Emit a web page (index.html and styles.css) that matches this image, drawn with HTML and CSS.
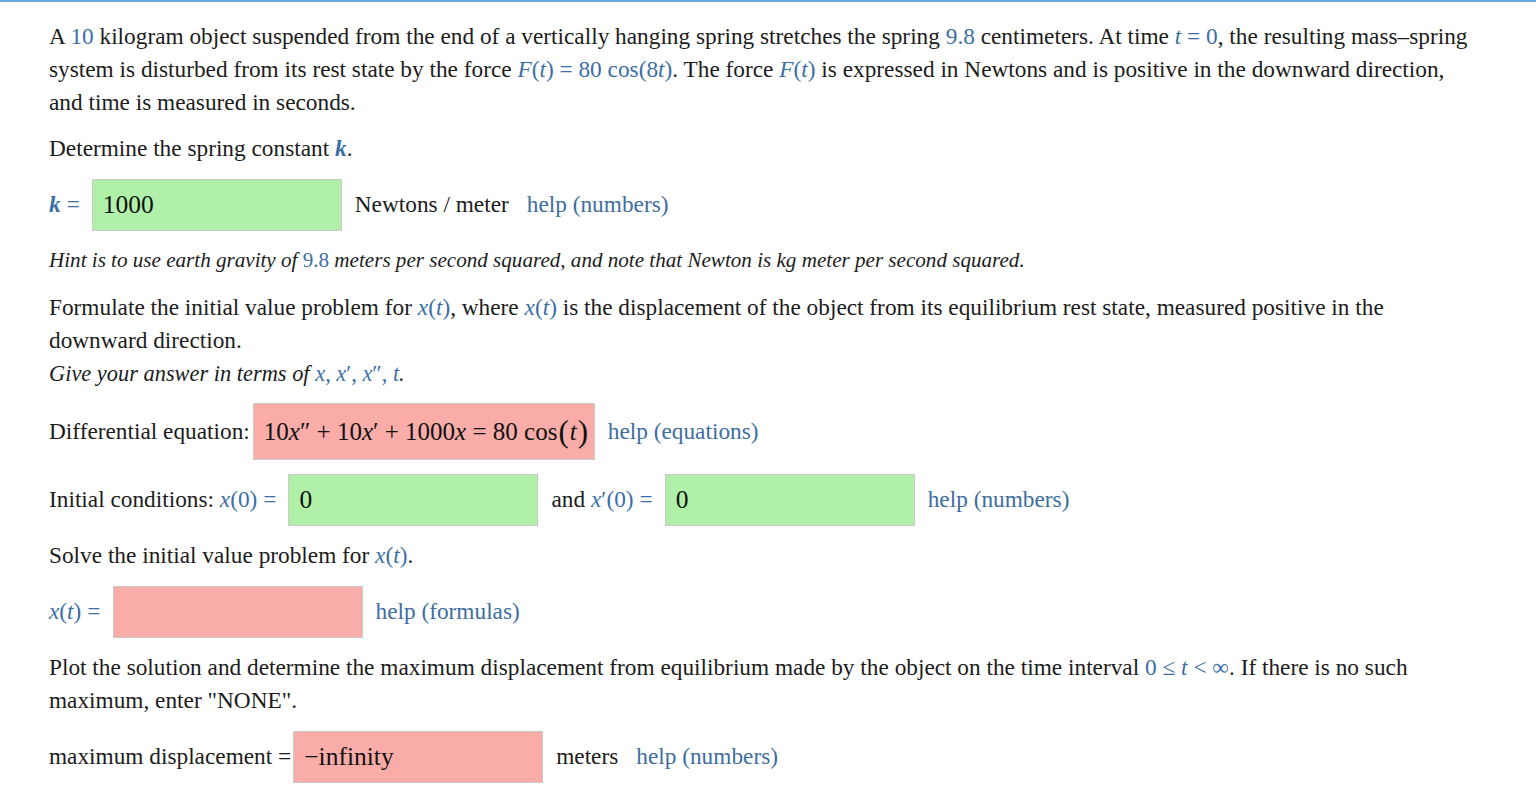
FILE: index.html
```html
<!DOCTYPE html>
<html lang="en">
<head>
<meta charset="utf-8">
<title>Mass-spring problem</title>
<link rel="stylesheet" href="styles.css">
</head>
<body>
<div class="topbar"></div>
<main class="problem">
  <p class="para">A <span class="m">10</span> kilogram object suspended from the end of a vertically hanging spring stretches the spring <span class="m">9.8</span> centimeters. At time <span class="m"><i>t</i> = 0</span>, the resulting mass–spring<br>system is disturbed from its rest state by the force <span class="m"><i>F</i>(<i>t</i>) = 80 cos(8<i>t</i>)</span>. The force <span class="m"><i>F</i>(<i>t</i>)</span> is expressed in Newtons and is positive in the downward direction,<br>and time is measured in seconds.</p>

  <p class="para">Determine the spring constant <span class="m"><i><b>k</b></i></span>.</p>

  <div class="row">
    <span class="m label"><i><b>k</b></i><span class="rel">=</span></span>
    <span class="ans ok">1000</span>
    <span class="unit">Newtons / meter</span>
    <a class="help" href="#">help (numbers)</a>
  </div>

  <p class="para hint">Hint is to use earth gravity of <span class="m up">9.8</span> meters per second squared, and note that Newton is kg meter per second squared.</p>

  <p class="para">Formulate the initial value problem for <span class="m"><i>x</i>(<i>t</i>)</span>, where <span class="m"><i>x</i>(<i>t</i>)</span> is the displacement of the object from its equilibrium rest state, measured positive in the<br>downward direction.<br><em class="give">Give your answer in terms of <span class="m"><i>x</i>, <i>x</i>′, <i>x</i>″, <i>t</i></span>.</em></p>

  <div class="row">
    <span class="label tight">Differential equation:</span>
    <span class="ans bad eq">10<i>x</i>″ + 10<i>x</i>′ + 1000<i>x</i> = 80 cos<span class="bigp">(</span><i>t</i><span class="bigp">)</span></span>
    <a class="help" href="#">help (equations)</a>
  </div>

  <div class="row">
    <span class="label">Initial conditions: <span class="m"><i>x</i>(0)<span class="rel">=</span></span></span>
    <span class="ans ok">0</span>
    <span class="label">and <span class="m"><i>x</i>′(0)<span class="rel">=</span></span></span>
    <span class="ans ok">0</span>
    <a class="help" href="#">help (numbers)</a>
  </div>

  <p class="para">Solve the initial value problem for <span class="m"><i>x</i>(<i>t</i>)</span>.</p>

  <div class="row">
    <span class="m label"><i>x</i>(<i>t</i>)<span class="rel">=</span></span>
    <span class="ans bad"></span>
    <a class="help" href="#">help (formulas)</a>
  </div>

  <p class="para">Plot the solution and determine the maximum displacement from equilibrium made by the object on the time interval <span class="m">0 ≤ <i>t</i> &lt; ∞</span>. If there is no such<br>maximum, enter "NONE".</p>

  <div class="row">
    <span class="label tighter">maximum displacement =</span>
    <span class="ans bad">−infinity</span>
    <span class="unit">meters</span>
    <a class="help" href="#">help (numbers)</a>
  </div>
</main>
</body>
</html>
```

FILE: styles.css
```css
html, body {
  margin: 0;
  padding: 0;
  background: #ffffff;
}

body {
  font-family: "Liberation Serif", "Times New Roman", serif;
  color: #1c1c1c;
}

.topbar {
  height: 2px;
  background: #6ca6d9;
}

.problem {
  display: flex;
  flex-direction: column;
  gap: 13.5px;
  padding: 17.5px 20px 0 49px;
  font-size: 23.3px;
  line-height: 33px;
}

.para {
  margin: 0;
}

.hint {
  font-style: italic;
  font-size: 21.1px;
}

.give {
  font-size: 22.4px;
}

.m {
  color: #3b6fa6;
  white-space: nowrap;
  font-style: normal;
}

.m i {
  font-style: italic;
}

.m b {
  font-weight: bold;
}

.rel {
  display: inline-block;
  width: 0.78em;
  margin: 0 0.15em;
  text-align: center;
}

.row {
  display: flex;
  align-items: center;
  white-space: nowrap;
}

.label {
  margin-right: 6px;
}

.label.tight {
  margin-right: 3px;
}

.label.tighter {
  margin-right: 2px;
}

.ans {
  box-sizing: border-box;
  width: 250px;
  height: 52px;
  border: 1px solid #c9c9c9;
  padding: 0 10px;
  display: flex;
  align-items: center;
  font-size: 25.5px;
  color: #111;
  margin-right: 13px;
}

.ok {
  background: #b0f0a9;
}

.bad {
  background: #f9aca8;
}

.eq {
  width: 342px;
  height: 57px;
  font-size: 25px;
  white-space: pre;
}

.eq i {
  font-style: italic;
}

.bigp {
  font-size: 31px;
  margin: 0 1px;
}

.unit {
  margin-right: 18px;
}

.help {
  color: #3d6e9f;
  text-decoration: none;
}
```
